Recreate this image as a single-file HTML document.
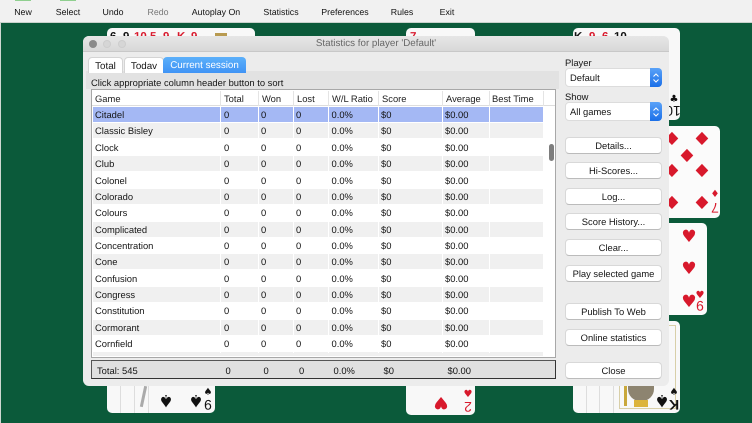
<!DOCTYPE html>
<html><head><meta charset="utf-8"><style>
html,body{margin:0;padding:0}
body{width:752px;height:423px;position:relative;overflow:hidden;background:#0b5a3a;font-family:"Liberation Sans",sans-serif;font-size:9.4px;color:#151515;text-rendering:geometricPrecision}
div{position:absolute;box-sizing:border-box;white-space:nowrap}
.m{top:5.5px;line-height:13px;transform:translateX(-50%);font-size:8.8px;color:#111}
.card{background:#f8f8f8;border-radius:5px}
.r{color:#d8192c}.k{color:#111}
.s{font-family:"DejaVu Sans",sans-serif;font-size:17px;line-height:17px;width:30px;text-align:center;margin-left:-15px;margin-top:-8.500px}
.d{font-size:18px;line-height:18px;margin-top:-9px;transform:scaleX(1.25)}
.i{font-family:"DejaVu Sans",sans-serif;font-size:10px;line-height:10px;width:20px;text-align:center;margin-left:-10px;margin-top:-5px}
.n{font-size:14px;line-height:14px;width:20px;text-align:center;margin-left:-10px;margin-top:-7px;transform:rotate(180deg)}
.u{top:31px;font-size:11.5px;line-height:12px;font-weight:bold}
.row{left:93px;width:450px;height:15px;line-height:16px}
.o{background:#f0f0f0}
.row div{top:0;font-size:9.4px}
.a{left:2px}.b1{left:131px}.b2{left:168px}.b3{left:203px}.b4{left:238.500px}.b5{left:288px}.b6{left:352px}
.sep{top:106px;height:247px;width:1px;background:#fff}
.hd{top:93px;line-height:12px;font-size:9.4px;color:#222}
.hs{top:91px;height:15px;width:1px;background:#e4e4e4}
.b{left:565px;width:97px;height:17px;background:#fff;border:1px solid #d8d8d8;border-bottom:1px solid #bbb;border-radius:4px;text-align:center;line-height:16px;font-size:9.400px;color:#151515}
.sel{left:565px;width:97px;height:19px;background:#fff;border-radius:4px;border:1px solid #dcdcdc;line-height:18px;padding-left:4px;font-size:9.4px}
.sel i{position:absolute;right:-1px;top:-1px;width:12px;height:19px;background:linear-gradient(#5aa2f8,#1a6fe8);border-radius:0 4px 4px 0}
.sel svg{position:absolute;right:1px;top:3px}
.t{top:365px;line-height:11px;font-size:9.4px}
.tab{top:57px;height:16px;line-height:17px;text-align:center;font-size:9.8px;background:#fff;border:1px solid #d4d4d4;border-bottom:0;border-radius:4px 4px 0 0}
</style></head><body>
<div style="left:0;top:0;width:1px;height:423px;background:#cfd8d2"></div>
<div style="left:0;top:0;width:752px;height:23px;background:#f1f1f1;border-bottom:1px solid #c9d2cc"></div>
<div style="left:15px;top:0;width:16px;height:1px;background:#8fcf8f"></div>
<div style="left:60px;top:0;width:16px;height:1px;background:#8fcf8f"></div>
<div class="m" style="left:23px">New</div><div class="m" style="left:68px">Select</div><div class="m" style="left:113px">Undo</div><div class="m" style="left:158px;color:#777">Redo</div><div class="m" style="left:216px">Autoplay On</div><div class="m" style="left:281px">Statistics</div><div class="m" style="left:345px">Preferences</div><div class="m" style="left:402px">Rules</div><div class="m" style="left:447px">Exit</div>

<div class="card" style="left:107px;top:28px;width:148px;height:20px"></div>
<div class="u k" style="left:110px">6</div><div class="u k" style="left:123px">9</div><div class="u r" style="left:134px">10</div><div class="u r" style="left:150px">5</div><div class="u r" style="left:163px">9</div><div class="u r" style="left:177px">K</div><div class="u r" style="left:191px">9</div>
<div style="left:215px;top:33px;width:12px;height:3px;background:#b89a50"></div>
<div class="card" style="left:406px;top:28px;width:69px;height:20px"></div>
<div class="u r" style="left:410px">7</div>
<div class="card" style="left:573px;top:28px;width:107px;height:92px"></div>
<div class="u k" style="left:574px">K</div><div class="u r" style="left:589px">9</div><div class="u r" style="left:602px">6</div><div class="u k" style="left:614px">10</div>
<div class="i k" style="left:674px;top:100px">♣</div>
<div class="n k" style="left:673px;top:111px">10</div>

<div class="card" style="left:640px;top:126px;width:80px;height:92px;background:#fbfbfb"></div>
<div class="r s d" style="left:672px;top:140px">♦</div><div class="r s d" style="left:702px;top:140px">♦</div>
<div class="r s d" style="left:687px;top:157px">♦</div>
<div class="r s d" style="left:672px;top:172px">♦</div><div class="r s d" style="left:702px;top:172px">♦</div>
<div class="r s d" style="left:672px;top:204px">♦</div><div class="r s d" style="left:702px;top:204px">♦</div>
<div class="r i" style="left:715px;top:195px">♦</div>
<div class="r n" style="left:715px;top:208px">7</div>

<div class="card" style="left:640px;top:223px;width:67px;height:92px;background:#fbfbfb"></div>
<div class="r s" style="left:689px;top:237px">♥</div><div class="r s" style="left:689px;top:269px">♥</div><div class="r s" style="left:689px;top:302px">♥</div>
<div class="r i" style="left:700px;top:296px">♥</div>
<div class="r n" style="left:700px;top:306px">9</div>

<div class="card" style="left:573px;top:321px;width:107px;height:92px"></div>
<div style="left:586px;top:370px;width:1px;height:43px;background:#ddd"></div><div style="left:599px;top:370px;width:1px;height:43px;background:#ddd"></div><div style="left:613px;top:370px;width:1px;height:43px;background:#ddd"></div>
<div style="left:619px;top:325px;width:57px;height:84px;border:1px solid #d8cfa8"></div>
<div style="left:628px;top:386px;width:26px;height:15px;background:#8d8470;border-radius:0 0 12px 12px"></div>
<div style="left:634px;top:400px;width:14px;height:7px;background:#dcb43c"></div>
<div style="left:624px;top:386px;width:3px;height:20px;background:#c9a83c"></div>
<div class="k s" style="left:662px;top:399px;transform:rotate(180deg)">♠</div>
<div class="k i" style="left:674px;top:393px">♠</div>
<div class="k n" style="left:674px;top:405px;font-weight:bold">K</div>

<div class="card" style="left:107px;top:370px;width:108px;height:43px"></div>
<div style="left:120px;top:380px;width:1px;height:33px;background:#ddd"></div><div style="left:134px;top:380px;width:1px;height:33px;background:#ddd"></div><div style="left:148px;top:380px;width:1px;height:33px;background:#ddd"></div>
<div style="left:142px;top:386px;width:3px;height:21px;background:#aaa;transform:rotate(12deg)"></div>
<div class="k s" style="left:166px;top:399px;transform:rotate(180deg)">♠</div>
<div class="k s" style="left:196px;top:399px;transform:rotate(180deg)">♠</div>
<div class="k i" style="left:208px;top:393px">♠</div>
<div class="k n" style="left:208px;top:405px">9</div>

<div class="card" style="left:406px;top:370px;width:69px;height:45px"></div>
<div class="r s" style="left:441px;top:401px;transform:rotate(180deg)">♥</div>
<div class="r i" style="left:468px;top:395px">♥</div>
<div class="r n" style="left:468px;top:407px">2</div>

<div style="left:83px;top:36px;width:586px;height:350px;background:#ececec;border-radius:6px"></div>
<div style="left:83px;top:36px;width:586px;height:16px;background:linear-gradient(#e6e6e6,#d8d8d8);border-radius:6px 6px 0 0;border-bottom:1px solid #c8c8c8;text-align:center;line-height:16px;font-size:9.8px;color:#666">Statistics for player 'Default'</div>
<div style="left:89px;top:40px;width:8px;height:8px;border-radius:50%;background:#8a8a8a"></div>
<div style="left:103px;top:40px;width:8px;height:8px;border-radius:50%;background:#d6d6d6;border:1px solid #cdcdcd"></div>
<div style="left:118px;top:40px;width:8px;height:8px;border-radius:50%;background:#d6d6d6;border:1px solid #cdcdcd"></div>

<div style="left:86px;top:71px;width:473px;height:18px;background:#e2e2e2"></div>
<div class="tab" style="left:88px;width:35px">Total</div>
<div class="tab" style="left:124px;width:40px">Todav</div>
<div class="tab" style="left:163px;width:83px;background:linear-gradient(#5cb0fa,#3f93f5);color:#fff;border:0;line-height:17px">Current session</div>
<div style="left:91px;top:76.500px;line-height:11px;font-size:9.4px">Click appropriate column header button to sort</div>

<div style="left:91px;top:89px;width:465px;height:269px;background:#fff;border:1px solid #a8a8a8"></div>
<div style="left:92px;top:105px;width:463px;height:1px;background:#ddd"></div>
<div class="hs" style="left:220px"></div><div class="hs" style="left:258px"></div><div class="hs" style="left:293px"></div><div class="hs" style="left:328px"></div><div class="hs" style="left:378px"></div><div class="hs" style="left:442px"></div><div class="hs" style="left:489px"></div><div class="hs" style="left:543px"></div>
<div class="hd" style="left:95px">Game</div><div class="hd" style="left:224px">Total</div><div class="hd" style="left:262px">Won</div><div class="hd" style="left:297px">Lost</div><div class="hd" style="left:332px">W/L Ratio</div><div class="hd" style="left:382px">Score</div><div class="hd" style="left:446px">Average</div><div class="hd" style="left:492px">Best Time</div>

<div class="row" style="top:107px;background:#a4b8f4"><div class="a">Citadel</div><div class="b1">0</div><div class="b2">0</div><div class="b3">0</div><div class="b4">0.0%</div><div class="b5">$0</div><div class="b6">$0.00</div></div>
<div class="row o" style="top:123.4px"><div class="a">Classic Bisley</div><div class="b1">0</div><div class="b2">0</div><div class="b3">0</div><div class="b4">0.0%</div><div class="b5">$0</div><div class="b6">$0.00</div></div>
<div class="row" style="top:139.700px"><div class="a">Clock</div><div class="b1">0</div><div class="b2">0</div><div class="b3">0</div><div class="b4">0.0%</div><div class="b5">$0</div><div class="b6">$0.00</div></div>
<div class="row o" style="top:156.100px"><div class="a">Club</div><div class="b1">0</div><div class="b2">0</div><div class="b3">0</div><div class="b4">0.0%</div><div class="b5">$0</div><div class="b6">$0.00</div></div>
<div class="row" style="top:172.500px"><div class="a">Colonel</div><div class="b1">0</div><div class="b2">0</div><div class="b3">0</div><div class="b4">0.0%</div><div class="b5">$0</div><div class="b6">$0.00</div></div>
<div class="row o" style="top:188.800px"><div class="a">Colorado</div><div class="b1">0</div><div class="b2">0</div><div class="b3">0</div><div class="b4">0.0%</div><div class="b5">$0</div><div class="b6">$0.00</div></div>
<div class="row" style="top:205.200px"><div class="a">Colours</div><div class="b1">0</div><div class="b2">0</div><div class="b3">0</div><div class="b4">0.0%</div><div class="b5">$0</div><div class="b6">$0.00</div></div>
<div class="row o" style="top:221.500px"><div class="a">Complicated</div><div class="b1">0</div><div class="b2">0</div><div class="b3">0</div><div class="b4">0.0%</div><div class="b5">$0</div><div class="b6">$0.00</div></div>
<div class="row" style="top:237.900px"><div class="a">Concentration</div><div class="b1">0</div><div class="b2">0</div><div class="b3">0</div><div class="b4">0.0%</div><div class="b5">$0</div><div class="b6">$0.00</div></div>
<div class="row o" style="top:254.300px"><div class="a">Cone</div><div class="b1">0</div><div class="b2">0</div><div class="b3">0</div><div class="b4">0.0%</div><div class="b5">$0</div><div class="b6">$0.00</div></div>
<div class="row" style="top:270.600px"><div class="a">Confusion</div><div class="b1">0</div><div class="b2">0</div><div class="b3">0</div><div class="b4">0.0%</div><div class="b5">$0</div><div class="b6">$0.00</div></div>
<div class="row o" style="top:287px"><div class="a">Congress</div><div class="b1">0</div><div class="b2">0</div><div class="b3">0</div><div class="b4">0.0%</div><div class="b5">$0</div><div class="b6">$0.00</div></div>
<div class="row" style="top:303.400px"><div class="a">Constitution</div><div class="b1">0</div><div class="b2">0</div><div class="b3">0</div><div class="b4">0.0%</div><div class="b5">$0</div><div class="b6">$0.00</div></div>
<div class="row o" style="top:319.700px"><div class="a">Cormorant</div><div class="b1">0</div><div class="b2">0</div><div class="b3">0</div><div class="b4">0.0%</div><div class="b5">$0</div><div class="b6">$0.00</div></div>
<div class="row" style="top:336.100px"><div class="a">Cornfield</div><div class="b1">0</div><div class="b2">0</div><div class="b3">0</div><div class="b4">0.0%</div><div class="b5">$0</div><div class="b6">$0.00</div></div>
<div class="o" style="left:93px;top:352px;width:450px;height:4px"></div>
<div class="sep" style="left:220px"></div><div class="sep" style="left:258px"></div><div class="sep" style="left:293px"></div><div class="sep" style="left:328px"></div><div class="sep" style="left:378px"></div><div class="sep" style="left:442px"></div><div class="sep" style="left:489px"></div>
<div style="left:549px;top:144px;width:5px;height:17px;border-radius:3px;background:#7d7d7d"></div>

<div style="left:91px;top:360px;width:465px;height:19px;background:#e0e0e0;border:1px solid #555;border-right-color:#333;border-bottom-color:#333"></div>
<div class="t" style="left:97px">Total: 545</div><div class="t" style="left:225.500px">0</div><div class="t" style="left:263.500px">0</div><div class="t" style="left:299px">0</div><div class="t" style="left:333.500px">0.0%</div><div class="t" style="left:383.500px">$0</div><div class="t" style="left:447.500px">$0.00</div>

<div style="left:565px;top:57px;line-height:11px;font-size:9.4px">Player</div>
<div class="sel" style="top:68px">Default<i></i><svg width="8" height="12" viewBox="0 0 8 12"><path d="M1.5 4.5 4 2l2.500 2.500M1.500 7.500 4 10l2.500-2.500" fill="none" stroke="#fff" stroke-width="1"/></svg></div>
<div style="left:565px;top:91px;line-height:11px;font-size:9.4px">Show</div>
<div class="sel" style="top:102px">All games<i></i><svg width="8" height="12" viewBox="0 0 8 12"><path d="M1.5 4.5 4 2l2.500 2.500M1.500 7.500 4 10l2.500-2.500" fill="none" stroke="#fff" stroke-width="1"/></svg></div>

<div class="b" style="top:137px">Details...</div>
<div class="b" style="top:162px">Hi-Scores...</div>
<div class="b" style="top:188px">Log...</div>
<div class="b" style="top:213px">Score History...</div>
<div class="b" style="top:239px">Clear...</div>
<div class="b" style="top:265px">Play selected game</div>
<div class="b" style="top:303px">Publish To Web</div>
<div class="b" style="top:329px">Online statistics</div>
<div class="b" style="top:362px">Close</div>
</body></html>
